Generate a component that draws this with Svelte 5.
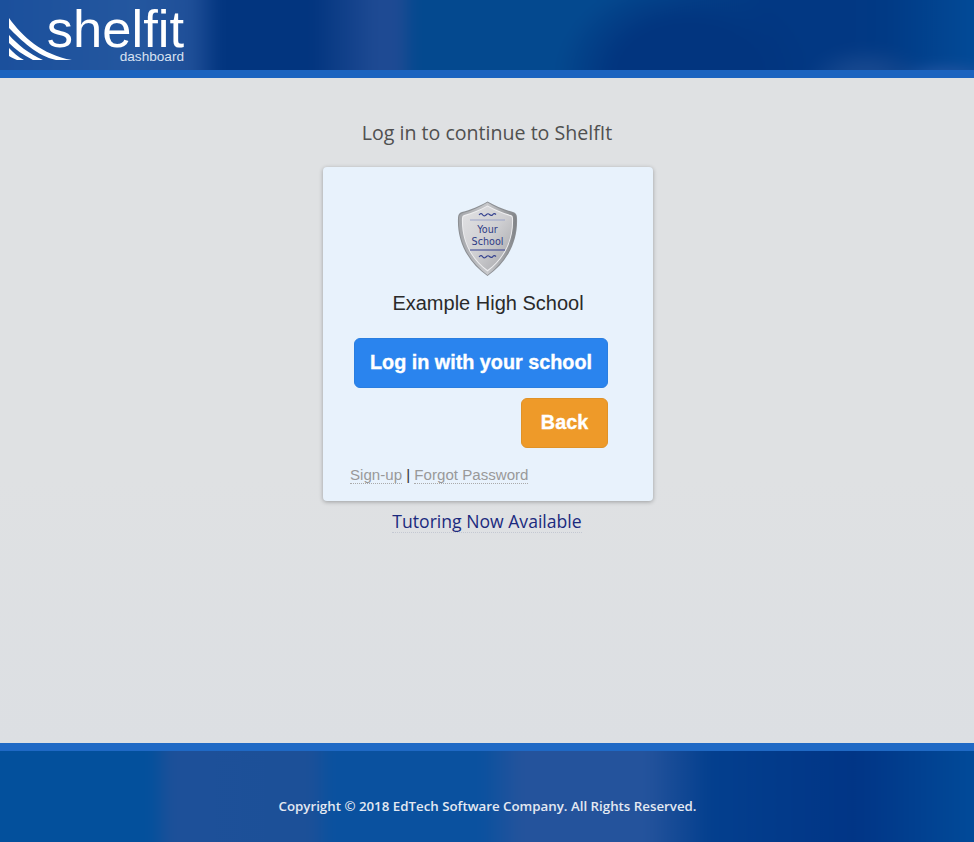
<script>
  const title = 'Log in to continue to ShelfIt';
</script>

<div class="page">
  <header class="top">
    <div class="logo">
      <svg class="swoosh" width="66" height="46" viewBox="0 0 66 46" aria-hidden="true">
        <path d="M0 0 C13 18 33 37 63 42 L47 42 C28 38 12 22 0 10 Z" fill="#fff" />
        <path d="M0 17 C8 26 20 36 34 42 L24 42 C14 37 6 31 0 25 Z" fill="#fff" />
        <path d="M0 30 C4 34 9 39 15 42 L8 42 C5 41 2 39 0 38 Z" fill="#fff" />
      </svg>
      <div class="brand">
        <span class="word">shelfit</span>
        <span class="sub">dashboard</span>
      </div>
    </div>
  </header>

  <main class="content">
    <h1>{title}</h1>
    <section class="card">
      <svg class="shield" width="62" height="76" viewBox="0 0 62 76" aria-hidden="true">
        <defs>
          <linearGradient id="metal" x1="0" y1="0" x2="1" y2="1">
            <stop offset="0" stop-color="#e2e2e4" />
            <stop offset="0.5" stop-color="#cfcfd2" />
            <stop offset="1" stop-color="#a2a3a7" />
          </linearGradient>
          <linearGradient id="rim" x1="0" y1="0" x2="1" y2="0">
            <stop offset="0" stop-color="#a4a6aa" />
            <stop offset="0.5" stop-color="#c8c9cc" />
            <stop offset="1" stop-color="#808387" />
          </linearGradient>
        </defs>
        <path d="M30.5 0.5 C38 5 48 9 56 11 Q60 12 60 17 C61 38 52 60 30.5 75 C9 60 0 38 1 17 Q1 12 5 11 C13 9 23 5 30.5 0.5 Z" fill="#8b8e92" />
        <path d="M30.5 1.5 C38 6 47 10 55 12 Q59 13 59 17 C60 38 51 59 30.5 74 C10 59 1 38 2 17 Q2 13 6 12 C14 10 23 6 30.5 1.5 Z" fill="url(#rim)" />
        <path d="M30.5 4.5 C38 8.5 46 12 54 14 Q56 14.5 56 17 C57 37 49 57 30.5 70.5 C12 57 4 37 5 17 Q5 14.5 7 14 C15 12 23 8.5 30.5 4.5 Z" fill="#eeeef0" />
        <path d="M30.5 5.5 C38 9.5 46 13 53 15 Q55 15.5 55 17 C56 37 48.5 56 30.5 69 C12.5 56 5 37 6 17 Q6 15.5 8 15 C15 13 23 9.5 30.5 5.5 Z" fill="url(#metal)" />
        <path d="M13 19 H48" stroke="#9aa3c9" stroke-width="1" />
        <path d="M13 49 H48" stroke="#34418f" stroke-width="1" />
        <g class="orn">
          <path d="M22 14 q2 -2.5 3.5 -0.5 q1 2 3 1 l1 -1 q1.5 -1.5 3 0 q1.5 1.5 3 0.5 q1.5 -2.5 3.5 -0.5" />
          <path d="M22 56 q2 -2.5 3.5 -0.5 q1 2 3 1 l1 -1 q1.5 -1.5 3 0 q1.5 1.5 3 0.5 q1.5 -2.5 3.5 -0.5" />
        </g>
        <text x="30.5" y="32" text-anchor="middle" class="st">Your</text>
        <text x="30.5" y="44" text-anchor="middle" class="st">School</text>
      </svg>
      <p class="school">Example High School</p>
      <div class="actions">
        <button class="btn primary">Log in with your school</button>
        <button class="btn back">Back</button>
      </div>
      <div class="links">
        <a href="#signup">Sign-up</a> <span class="sep">|</span> <a href="#forgot">Forgot Password</a>
      </div>
    </section>
    <a class="tutor" href="#tutoring">Tutoring Now Available</a>
  </main>

  <footer class="bottom">
    <p>Copyright © 2018 EdTech Software Company. All Rights Reserved.</p>
  </footer>
</div>

<style>
  :global(body) {
    margin: 0;
    background: #dfe1e3;
  }
  .page {
    height: 842px;
    display: flex;
    flex-direction: column;
    overflow: hidden;
    font-family: "Liberation Sans", Arial, sans-serif;
  }
  .top {
    height: 70px;
    flex: none;
    position: relative;
    overflow: hidden;
    border-bottom: 8px solid #1b63bf;
    background: #02408a;
  }
  .top::before {
    content: "";
    position: absolute;
    inset: -14px;
    filter: blur(6px);
    background:
      radial-gradient(ellipse 60px 32px at 880px 92px, #17488f 30%, transparent 100%),
      radial-gradient(ellipse 55px 14px at 960px 90px, #1f53a0 30%, transparent 100%),
      radial-gradient(ellipse 130px 100px at 700px 90px, #02357f 55%, transparent 100%),
      linear-gradient(90deg, #1a4f9c 0, #24579f 150px, #1f4f98 205px, #02357f 235px, #02357f 325px, #1e4a93 390px, #1e4a93 412px, #04498f 430px, #04498f 620px, #04498f 680px, #023883 780px, #023883 860px, #013a85 900px, #024a97 988px);
  }
  .logo {
    display: flex;
    align-items: flex-start;
    height: 70px;
    padding-left: 9px;
    position: relative;
  }
  .swoosh {
    margin-top: 18px;
    flex: none;
  }
  .brand {
    position: absolute;
    left: 44px;
    top: 0;
    width: 140px;
    display: flex;
    flex-direction: column;
    align-items: flex-end;
    color: #fff;
  }
  .word {
    font-size: 52.5px;
    line-height: 40px;
    margin-top: 9px;
  }
  .sub {
    font-size: 13.6px;
    line-height: 14px;
    margin-top: 1px;
    color: #d8e2f2;
  }
  .content {
    flex: 1;
    display: flex;
    flex-direction: column;
    align-items: center;
    background: linear-gradient(180deg, #dfe1e3 0, #dfe1e3 400px, #dcdfe3 665px);
  }
  h1 {
    margin: 44px 0 0;
    font-family: "Open Sans", sans-serif;
    font-weight: 400;
    font-size: 19.6px;
    line-height: 22px;
    color: #505050;
  }
  .card {
    box-sizing: border-box;
    width: 330px;
    height: 334px;
    margin: 23px 0 0 2px;
    padding-top: 34px;
    display: flex;
    flex-direction: column;
    align-items: center;
    background: #e8f2fc;
    border-radius: 4px;
    box-shadow: 0 1px 4px rgba(0, 0, 0, 0.3);
  }
  .shield {
    flex: none;
  }
  .orn path {
    stroke: #34418f;
    stroke-width: 1.1;
    fill: none;
  }
  .st {
    font-family: "DejaVu Sans", sans-serif;
    font-size: 9.6px;
    fill: #2f3b86;
  }
  .school {
    margin: 14px 0 0;
    font-size: 20px;
    line-height: 24px;
    color: #2a2a2a;
  }
  .actions {
    box-sizing: border-box;
    width: 100%;
    padding: 0 45px 0 31px;
    margin-top: 23px;
    display: flex;
    flex-direction: column;
    align-items: flex-end;
    gap: 10px;
  }
  .btn {
    height: 50px;
    border-radius: 6px;
    border: 1px solid transparent;
    color: #fff;
    font-family: "Liberation Sans", Arial, sans-serif;
    font-weight: 700;
    font-size: 19.8px;
    padding: 0 0 2px;
    -webkit-text-stroke: 0.35px #fff;
  }
  .primary {
    width: 100%;
    background: #2a84ee;
    border-color: #2a7ee0;
  }
  .back {
    width: 87px;
    background: #ee9a29;
    border-color: #e09227;
  }
  .links {
    align-self: flex-start;
    margin: 18px 0 0 27px;
    font-size: 15.1px;
    line-height: 18px;
    color: #333;
  }
  .links a {
    color: #999;
    text-decoration: none;
    border-bottom: 1px dotted #aaa;
  }
  .tutor {
    margin-top: 9px;
    font-family: "Open Sans", sans-serif;
    font-size: 17.6px;
    line-height: 22px;
    color: #1b2a7e;
    text-decoration: none;
    border-bottom: 1px dotted #c4c8d2;
  }
  .bottom {
    height: 99px;
    flex: none;
    box-sizing: border-box;
    position: relative;
    overflow: hidden;
    border-top: 8px solid #1f69c5;
    background: #03458f;
    display: flex;
    justify-content: center;
    align-items: flex-start;
  }
  .bottom::before {
    content: "";
    position: absolute;
    inset: -14px;
    filter: blur(6px);
    background: linear-gradient(90deg, #03509c 0, #03509c 165px, #1d5099 185px, #1c5098 325px, #0a519f 345px, #0a519f 495px, #24539c 535px, #24539c 660px, #033f8e 725px, #013586 870px, #014a99 988px);
  }
  .bottom p {
    position: relative;
    margin: 46px 0 0 1px;
    font-family: "Open Sans", sans-serif;
    font-weight: 600;
    font-size: 13.3px;
    line-height: 18px;
    color: #e4e9f2;
  }
</style>
